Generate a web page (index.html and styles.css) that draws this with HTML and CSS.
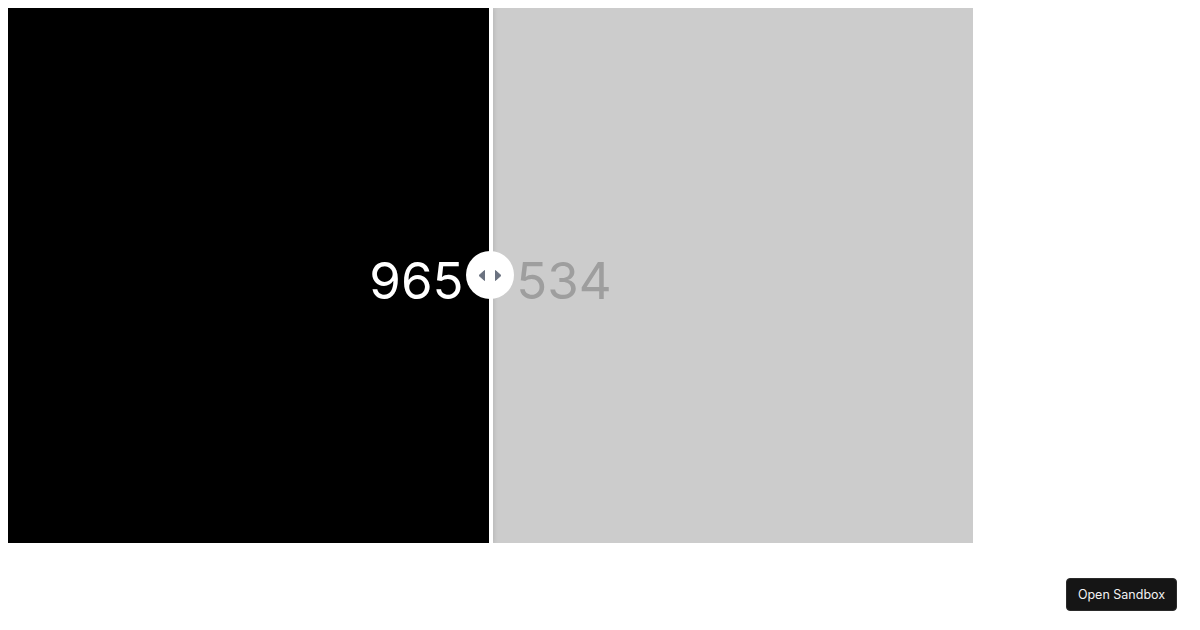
FILE: index.html
```html
<!DOCTYPE html>
<html>
<head>
<meta charset="utf-8">
<link rel="stylesheet" href="styles.css">
</head>
<body>
<div class="compare">
  <div class="layer layer-b"><span class="label">965<span class="sep">×</span>534</span></div>
  <div class="layer layer-a"><span class="label">965<span class="sep">×</span>534</span></div>
  <div class="divider"></div>
  <div class="handle">
    <svg width="48" height="48" viewBox="0 0 48 48">
      <circle cx="24" cy="24" r="24" fill="#fff"/>
      <polygon points="13,24.5 18.5,19.5 18.5,29.5" fill="#6b7280" stroke="#6b7280" stroke-width="1" stroke-linejoin="round"/>
      <polygon points="35,24.5 29.5,19.5 29.5,29.5" fill="#6b7280" stroke="#6b7280" stroke-width="1" stroke-linejoin="round"/>
    </svg>
  </div>
</div>
<button class="sandbox-btn">Open Sandbox</button>
</body>
</html>
```
FILE: styles.css
```css
html, body {
  margin: 0;
  padding: 0;
  background: #fff;
}
body {
  padding: 8px;
  font-family: Inter, "Liberation Sans", sans-serif;
}
.compare {
  position: relative;
  width: 965px;
  height: 535px;
  overflow: hidden;
}
.layer {
  position: absolute;
  inset: 0;
  display: flex;
  align-items: center;
  justify-content: center;
  padding-top: 10px;
  box-sizing: border-box;
}
.label {
  font-family: Inter, "Liberation Sans", sans-serif;
  font-size: 51px;
  line-height: 1;
}
.sep {
  margin: 0 9.5px;
}
.layer-a {
  background: #000;
  color: #fff;
  clip-path: inset(0 50% 0 0);
}
.layer-b {
  background: #cccccc;
  color: #9e9e9e;
}
.divider {
  position: absolute;
  top: 0;
  bottom: 0;
  left: 481px;
  width: 4px;
  background: #fff;
  box-shadow: 1px 0 4px rgba(0, 0, 0, 0.12);
}
.handle {
  position: absolute;
  left: 458px;
  top: 243px;
  width: 48px;
  height: 48px;
}
.handle svg {
  display: block;
}
.sandbox-btn {
  position: fixed;
  right: 23px;
  bottom: 19px;
  width: 111px;
  height: 33px;
  background: #151515;
  color: #f2f2f2;
  border: 1px solid #2a2a2a;
  border-radius: 4px;
  font-family: Inter, "Liberation Sans", sans-serif;
  font-size: 12.5px;
  padding: 0 0 1px;
  cursor: pointer;
}
```
